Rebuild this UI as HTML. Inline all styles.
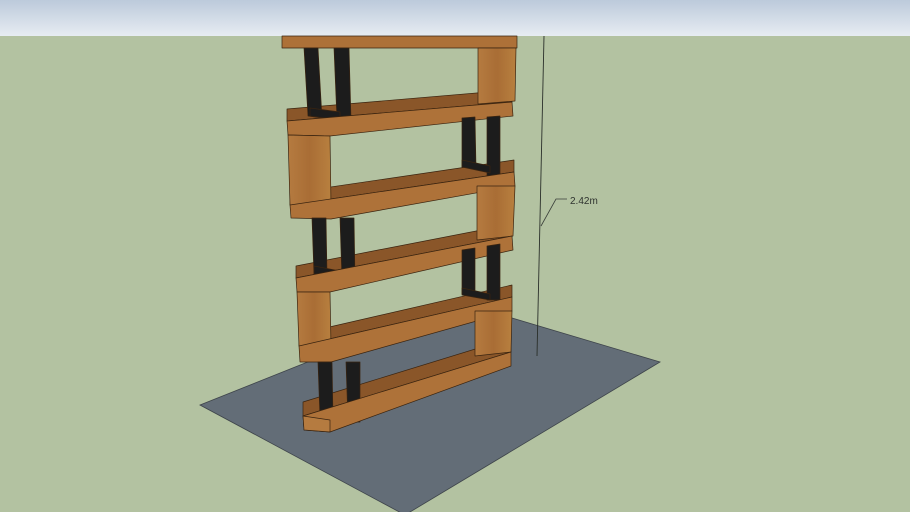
<!DOCTYPE html>
<html><head><style>html,body{margin:0;padding:0;width:910px;height:512px;overflow:hidden;}</style></head>
<body>
<svg width="910" height="512" viewBox="0 0 910 512" xmlns="http://www.w3.org/2000/svg">
<defs>
<linearGradient id="sky" x1="0" y1="0" x2="0" y2="1"><stop offset="0" stop-color="#bccadb"/><stop offset="1" stop-color="#e7ecf2"/></linearGradient>
<linearGradient id="wf" x1="0" y1="0" x2="1" y2="0"><stop offset="0" stop-color="#b57b40"/><stop offset="0.5" stop-color="#a96d35"/><stop offset="1" stop-color="#b8803f"/></linearGradient>
</defs>
<rect x="0" y="0" width="910" height="36" fill="url(#sky)"/>
<rect x="0" y="36" width="910" height="476" fill="#b3c2a1"/>
<polygon points="200,405 458,302 660,362 405,515" fill="#636d77" stroke="#3e444a" stroke-width="0.8"/>
<g stroke="#3a2410" stroke-width="0.7" stroke-linejoin="round">
<!-- top surfaces -->
<polygon points="287,121 512,102 512,90 287,109" fill="#8a5629"/>
<polygon points="290,205 514,172 514,160 290,193" fill="#8a5629"/>
<polygon points="296,278 512,236 512,224 296,266" fill="#8a5629"/>
<polygon points="299,346 512,297 512,285 299,334" fill="#8a5629"/>
<polygon points="303,416 511,352 511,338 303,402" fill="#8a5629"/>
<!-- Top shelf A -->
<rect x="282" y="36" width="235" height="12" fill="#ad7138"/>
<polygon points="478,48 516,48 515,101 478,104" fill="url(#wf)"/>
<!-- legs A-B -->
<polygon points="304,48 318,48 322,118 308,116" fill="#1c1c1c"/>
<polygon points="334,48 349,48 351,120 337,120" fill="#1c1c1c"/>
<polygon points="310,108 340,112 340,120 310,116" fill="#1c1c1c"/>
<!-- Shelf B -->
<polygon points="287,121 512,102 513,116 330,136 288,135" fill="#ae7239"/>
<!-- left panel B-C -->
<polygon points="288,135 330,136 331,205 290,205" fill="url(#wf)"/>
<!-- legs B-C -->
<polygon points="462,118 475,117 476,168 462,167" fill="#1c1c1c"/>
<polygon points="487,117 500,116 500,176 487,176" fill="#1c1c1c"/>
<polygon points="462,160 490,166 490,173 462,167" fill="#1c1c1c"/>
<!-- Shelf C -->
<polygon points="290,205 514,172 515,186 331,219 291,218" fill="#ae7239"/>
<!-- right panel C-D -->
<polygon points="477,186 515,186 513,236 477,240" fill="url(#wf)"/>
<!-- legs C-D -->
<polygon points="312,218 326,218 327,275 314,275" fill="#1c1c1c"/>
<polygon points="340,218 354,218 355,280 342,280" fill="#1c1c1c"/>
<polygon points="314,266 345,272 345,280 314,274" fill="#1c1c1c"/>
<!-- Shelf D -->
<polygon points="296,278 512,236 513,250 330,292 297,292" fill="#ae7239"/>
<!-- left panel D-E -->
<polygon points="297,292 330,292 331,346 299,346" fill="url(#wf)"/>
<!-- legs D-E -->
<polygon points="462,250 475,248 475,295 462,294" fill="#1c1c1c"/>
<polygon points="487,246 500,244 500,300 487,300" fill="#1c1c1c"/>
<polygon points="462,288 490,294 490,300 462,295" fill="#1c1c1c"/>
<!-- Shelf E -->
<polygon points="299,346 512,297 512,311 331,362 300,362" fill="#ae7239"/>
<!-- right panel E-F -->
<polygon points="475,311 512,311 511,352 475,356" fill="url(#wf)"/>
<!-- legs E-F -->
<polygon points="318,362 332,362 333,418 320,418" fill="#1c1c1c"/>
<polygon points="346,362 360,362 360,422 348,422" fill="#1c1c1c"/>
<polygon points="320,410 352,416 352,422 320,418" fill="#1c1c1c"/>
<!-- Shelf F -->
<polygon points="303,416 511,352 511,366 330,432 304,430" fill="#ae7239"/>
<polygon points="303,416 330,420 330,432 304,430" fill="#b57b40"/>
</g>
<!-- dimension -->
<line x1="544" y1="36" x2="537" y2="356" stroke="#2a2f2a" stroke-width="0.9"/>
<polyline points="541,226 556,199 567,199" fill="none" stroke="#3a3f3a" stroke-width="0.8"/>
<text x="570" y="204" font-family="Liberation Sans, sans-serif" font-size="10" fill="#2f332f">2.42m</text>
</svg>
</body></html>
